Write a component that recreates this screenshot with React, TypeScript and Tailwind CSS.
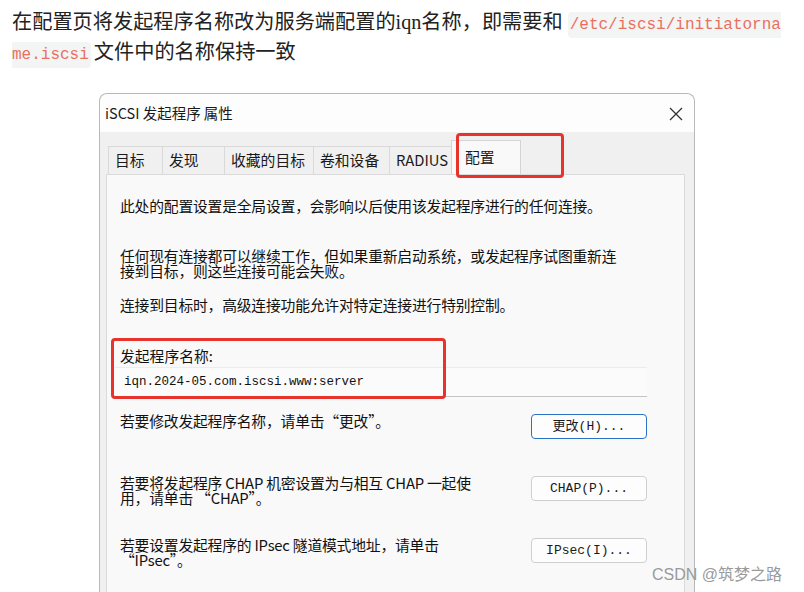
const tabs = [
  { label: "目标", w: "w-[55px]" },
  { label: "发现", w: "w-[63px]" },
  { label: "收藏的目标", w: "w-[90px]" },
  { label: "卷和设备", w: "w-[77px]" },
  { label: "RADIUS", w: "w-[63px]" },
];

const ActionRow = ({
  lines,
  button,
  focused,
  className,
}: {
  lines: string[];
  button: string;
  focused?: boolean;
  className?: string;
}) => (
  <div className={`flex items-start justify-between ${className ?? ""}`}>
    <p className="pl-[5px] text-[14.8px] leading-[14.5px] tracking-[-0.2px]">
      {lines.map((l, i) => (
        <span key={i} className="block">
          {l}
        </span>
      ))}
    </p>
    <button
      className={`flex h-[25px] w-[116px] items-center justify-center rounded-[4px] bg-[#fdfdfd] font-['Liberation_Mono','Noto_Sans_CJK_SC',monospace] text-[13px] text-[#1a1a1a] ${
        focused ? "border-[1.5px] border-[#2a72c4]" : "border border-[#cfcfcf]"
      }`}
    >
      {button}
    </button>
  </div>
);

const App = () => {
  return (
    <div className="relative h-[592px] w-[804px] overflow-hidden bg-white">
      {/* article text */}
      <p className="h-[67px] pl-[12px] pr-[16px] pt-[7px] font-['Liberation_Serif','Noto_Sans_CJK_SC',serif] text-[20.2px] leading-[30px] text-[#222]">
        在配置页将发起程序名称改为服务端配置的iqn名称，即需要和
        <code className="ml-[5px] break-all rounded-[4px] bg-[#f3f4f4] px-[2px] py-[4px] font-['Liberation_Mono',monospace] text-[16px] leading-[20px] text-[#e9705f]">
          /etc/iscsi/initiatorname.iscsi
        </code>
        <span className="ml-[3px]">文件中的名称保持一致</span>
      </p>

      {/* dialog screenshot */}
      <div className="relative ml-[99px] mt-[26px] h-[520px] w-[596px] rounded-t-[8px] border border-b-0 border-[#b9b9b9] bg-[#f0f0f0] font-['Noto_Sans_CJK_SC',sans-serif] text-[#1a1a1a]">
        <div className="flex h-[38px] items-center justify-between rounded-t-[8px] bg-[#fdfdfd] pl-[5px] pr-[8px]">
          <span className="text-[14.5px]">iSCSI 发起程序 属性</span>
          <svg width="14" height="14" viewBox="0 0 14 14" className="mr-[3px] mt-[1px]">
            <path d="M1 1L13 13M13 1L1 13" stroke="#333" strokeWidth="1.3" />
          </svg>
        </div>

        <div className="px-[6px] pt-[8px]">
          <div className="flex h-[34px] items-end pl-[2px]">
            {tabs.map((t) => (
              <div
                key={t.label}
                className={`${t.w} -ml-[1px] flex h-[28px] items-center border border-b-0 border-[#d9d9d9] pl-[6px] text-[14.8px] first:ml-0`}
              >
                {t.label}
              </div>
            ))}
            <div className="-ml-[1px] flex h-[34px] w-[70px] items-center border border-b-0 border-[#d4d4d4] bg-[#f9f9f9] pl-[13px] text-[14.8px]">
              配置
            </div>
          </div>

          <div className="h-[460px] w-[579px] border border-[#dadada] bg-[#f9f9f9] pl-[8px] pr-[37px] pt-[23px] text-[#111]">
            <p className="pl-[5px] text-[14.8px] leading-[16px] tracking-[-0.2px]">
              此处的配置设置是全局设置，会影响以后使用该发起程序进行的任何连接。
            </p>
            <p className="mt-[35px] pl-[5px] text-[14.8px] leading-[14.5px] tracking-[-0.2px]">
              <span className="block">任何现有连接都可以继续工作，但如果重新启动系统，或发起程序试图重新连</span>
              <span className="block">接到目标，则这些连接可能会失败。</span>
            </p>
            <p className="mt-[19px] pl-[5px] text-[14.8px] leading-[16px] tracking-[-0.2px]">
              连接到目标时，高级连接功能允许对特定连接进行特别控制。
            </p>
            <p className="mt-[35px] pl-[5px] text-[14.8px] leading-[16px]">发起程序名称:</p>
            <div className="mt-[3px] flex h-[30px] items-center border-b border-t border-b-[#c4c4c4] border-t-[#ececec] bg-[#fbfbfb] pl-[9px] font-['Liberation_Mono',monospace] text-[12.5px]">
              iqn.2024-05.com.iscsi.www:server
            </div>

            <ActionRow
              className="mt-[17px] items-center"
              lines={["若要修改发起程序名称，请单击“更改”。"]}
              button="更改(H)..."
              focused
            />
            <ActionRow
              className="mt-[37px]"
              lines={["若要将发起程序 CHAP 机密设置为与相互 CHAP 一起使", "用，请单击 “CHAP”。"]}
              button="CHAP(P)..."
            />
            <ActionRow
              className="mt-[33px]"
              lines={["若要设置发起程序的 IPsec 隧道模式地址，请单击", "“IPsec”。"]}
              button="IPsec(I)..."
            />
          </div>
        </div>

        {/* red annotation boxes */}
        <div className="absolute left-[356px] top-[39px] h-[45px] w-[108px] rounded-[4px] border-[3px] border-[#e8322c]" />
        <div className="absolute left-[11px] top-[244px] h-[61px] w-[335px] rounded-[4px] border-[3px] border-[#e8322c]" />
      </div>

      <span className="absolute left-[652px] top-[563px] font-['Liberation_Sans','Noto_Sans_CJK_SC',sans-serif] text-[16px] text-[#9a9a9a]">
        CSDN @筑梦之路
      </span>
    </div>
  );
};

export default App;
